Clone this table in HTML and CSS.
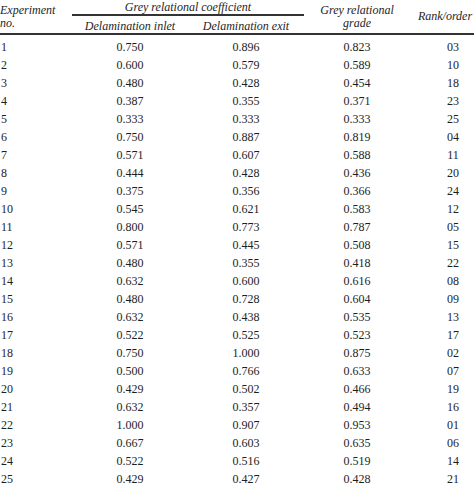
FILE: index.html
```html
<!DOCTYPE html>
<html>
<head>
<meta charset="utf-8">
<link rel="stylesheet" href="styles.css">
</head>
<body>
<table class="grt">
  <colgroup>
    <col class="c-exp"><col class="c-in"><col class="c-out"><col class="c-grade"><col class="c-rank">
  </colgroup>
  <thead>
    <tr class="h1">
      <th rowspan="2" class="th-exp">Experiment<br>no.</th>
      <th colspan="2" class="th-coef">Grey relational coefficient</th>
      <th rowspan="2" class="th-grade">Grey relational<br>grade</th>
      <th rowspan="2" class="th-rank">Rank/order</th>
    </tr>
    <tr class="h2">
      <th class="th-sub">Delamination inlet</th>
      <th class="th-sub">Delamination exit</th>
    </tr>
  </thead>
  <tbody>
    <tr><td>1</td><td>0.750</td><td>0.896</td><td>0.823</td><td>03</td></tr>
    <tr><td>2</td><td>0.600</td><td>0.579</td><td>0.589</td><td>10</td></tr>
    <tr><td>3</td><td>0.480</td><td>0.428</td><td>0.454</td><td>18</td></tr>
    <tr><td>4</td><td>0.387</td><td>0.355</td><td>0.371</td><td>23</td></tr>
    <tr><td>5</td><td>0.333</td><td>0.333</td><td>0.333</td><td>25</td></tr>
    <tr><td>6</td><td>0.750</td><td>0.887</td><td>0.819</td><td>04</td></tr>
    <tr><td>7</td><td>0.571</td><td>0.607</td><td>0.588</td><td>11</td></tr>
    <tr><td>8</td><td>0.444</td><td>0.428</td><td>0.436</td><td>20</td></tr>
    <tr><td>9</td><td>0.375</td><td>0.356</td><td>0.366</td><td>24</td></tr>
    <tr><td>10</td><td>0.545</td><td>0.621</td><td>0.583</td><td>12</td></tr>
    <tr><td>11</td><td>0.800</td><td>0.773</td><td>0.787</td><td>05</td></tr>
    <tr><td>12</td><td>0.571</td><td>0.445</td><td>0.508</td><td>15</td></tr>
    <tr><td>13</td><td>0.480</td><td>0.355</td><td>0.418</td><td>22</td></tr>
    <tr><td>14</td><td>0.632</td><td>0.600</td><td>0.616</td><td>08</td></tr>
    <tr><td>15</td><td>0.480</td><td>0.728</td><td>0.604</td><td>09</td></tr>
    <tr><td>16</td><td>0.632</td><td>0.438</td><td>0.535</td><td>13</td></tr>
    <tr><td>17</td><td>0.522</td><td>0.525</td><td>0.523</td><td>17</td></tr>
    <tr><td>18</td><td>0.750</td><td>1.000</td><td>0.875</td><td>02</td></tr>
    <tr><td>19</td><td>0.500</td><td>0.766</td><td>0.633</td><td>07</td></tr>
    <tr><td>20</td><td>0.429</td><td>0.502</td><td>0.466</td><td>19</td></tr>
    <tr><td>21</td><td>0.632</td><td>0.357</td><td>0.494</td><td>16</td></tr>
    <tr><td>22</td><td>1.000</td><td>0.907</td><td>0.953</td><td>01</td></tr>
    <tr><td>23</td><td>0.667</td><td>0.603</td><td>0.635</td><td>06</td></tr>
    <tr><td>24</td><td>0.522</td><td>0.516</td><td>0.519</td><td>14</td></tr>
    <tr><td>25</td><td>0.429</td><td>0.427</td><td>0.428</td><td>21</td></tr>
  </tbody>
</table>
</body>
</html>
```
FILE: styles.css
```css
html, body {
  margin: 0;
  padding: 0;
  background: #fff;
}

body {
  overflow: hidden;
  font-family: "Liberation Serif", "Times New Roman", serif;
  font-size: 12px;
  color: #1e1e1e;
}

.grt {
  width: 474px;
  table-layout: fixed;
  border-collapse: separate;
  border-spacing: 0;
}

.c-exp { width: 72px; }
.c-in { width: 116px; }
.c-out { width: 116px; }
.c-grade { width: 106px; }
.c-rank { width: 64px; }

.grt th {
  font-weight: normal;
  font-style: italic;
  line-height: 13px;
  padding: 0;
  text-align: center;
  border-bottom: 2px solid #333;
}

.grt .th-exp {
  text-align: left;
  vertical-align: top;
  padding-top: 4px;
}

.grt .th-grade {
  vertical-align: top;
  padding-top: 4px;
}

.grt .th-rank {
  vertical-align: middle;
  padding-left: 6px;
}

.grt .th-coef {
  box-sizing: border-box;
  height: 16px;
  padding-top: 1px;
  vertical-align: top;
}

.grt .th-sub {
  box-sizing: border-box;
  height: 19px;
  padding-top: 4px;
  vertical-align: top;
}

.grt td {
  padding: 0;
  height: 18px;
  line-height: 18px;
  text-align: center;
  white-space: nowrap;
}

.grt td:first-child {
  text-align: left;
  padding-left: 1px;
}

.grt td:last-child {
  padding-left: 22px;
}

.grt tbody tr:first-child td {
  padding-top: 3px;
}
```
